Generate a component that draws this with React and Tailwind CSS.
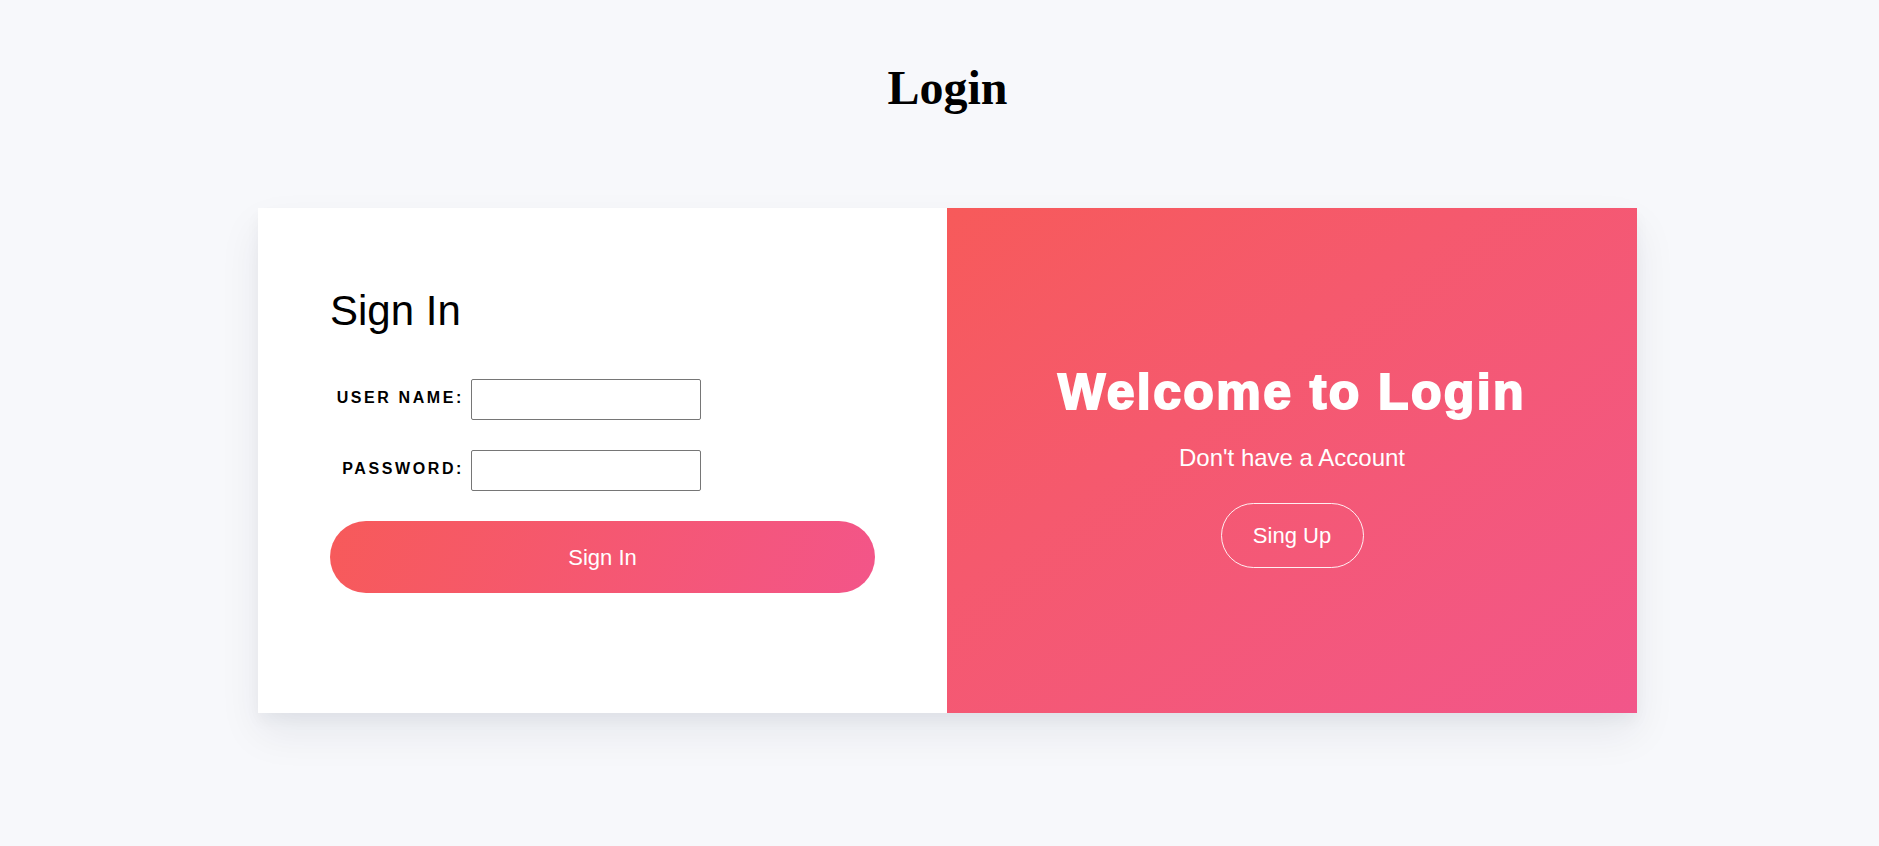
import { useState } from 'react'

const SANS = { fontFamily: '"Liberation Sans", Arial, sans-serif' }

// Two-pane login card: form on the left, gradient welcome panel on the right.
export default function App() {
  const [form, setForm] = useState({ username: '', password: '' })

  function update(patch) {
    setForm({ ...form, ...patch })
  }

  return (
    <div className="min-h-screen bg-[#f7f8fb] pl-[16px] pb-[130px]">
      <h1
        className="pt-[60px] text-center text-[48px] font-bold leading-[56px] text-black"
        style={{ fontFamily: '"Liberation Serif", "Times New Roman", serif' }}
      >
        Login
      </h1>

      <div
        className="mx-auto mt-[92px] flex h-[505px] w-[1379px] bg-white shadow-[0_20px_40px_rgba(20,30,60,0.07),0_8px_14px_rgba(20,30,60,0.04)]"
        style={SANS}
      >
        {/* Sign in form */}
        <div className="w-[689px] pl-[72px] pt-[80px]">
          <h2 className="text-[42px] font-normal leading-[46px] text-black">Sign In</h2>

          <div className="mt-[45px] flex items-center">
            <label className="mb-[4px] w-[140px] pr-[6px] text-right text-[16px] font-bold tracking-[2.6px] text-black">
              USER NAME:
            </label>
            <input
              type="text"
              value={form.username}
              onChange={(e) => update({ username: e.target.value })}
              className="ml-[1px] h-[41px] w-[230px] rounded-[2px] border border-[#767676] bg-white px-2 text-[16px] outline-none"
            />
          </div>

          <div className="mt-[30px] flex items-center">
            <label className="mb-[4px] w-[140px] pr-[6px] text-right text-[16px] font-bold tracking-[2.6px] text-black">
              PASSWORD:
            </label>
            <input
              type="password"
              value={form.password}
              onChange={(e) => update({ password: e.target.value })}
              className="ml-[1px] h-[41px] w-[230px] rounded-[2px] border border-[#767676] bg-white px-2 text-[16px] outline-none"
            />
          </div>

          <button className="mt-[30px] flex h-[72px] w-[545px] items-center justify-center rounded-full bg-linear-[110deg] from-[#f75a5a] to-[#f35589] text-[22px] leading-[25px] text-white">
            Sign In
          </button>
        </div>

        {/* Welcome panel */}
        <div className="flex flex-1 flex-col items-center bg-linear-to-br from-[#f75a5a] to-[#f2568a] pt-[155px] text-white">
          <h2 className="text-[50px] font-bold leading-[58px] tracking-[2.4px] [-webkit-text-stroke:2px_white]">
            Welcome to Login
          </h2>
          <p className="mt-[23px] text-[24px] leading-[28px]">Don't have a Account</p>
          <button className="mt-[31px] flex h-[65px] w-[143px] items-center justify-center rounded-full border border-white/90 text-[22px] leading-[25px] text-white">
            Sing Up
          </button>
        </div>
      </div>
    </div>
  )
}
